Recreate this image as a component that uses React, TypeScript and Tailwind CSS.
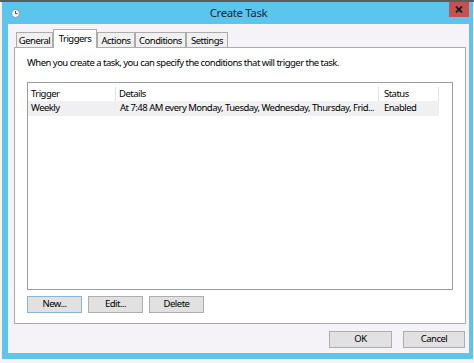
import React from "react";

const font = { fontFamily: '"Noto Sans", "Open Sans", sans-serif' };
const txt = "text-[9.5px] tracking-[-0.52px] text-black";

function Tab({ label, w, active }: { label: string; w: string; active?: boolean }) {
  return active ? (
    <div
      className={`${w} relative z-10 -mb-px flex h-[19px] justify-center border border-b-0 border-[#acacac] bg-white pt-[2px] ${txt} leading-[14px]`}
    >
      {label}
    </div>
  ) : (
    <div
      className={`${w} flex h-[15px] justify-center border border-b-0 border-[#acacac] bg-[#f0f0f0] pt-[1px] ${txt} leading-[13px]`}
    >
      {label}
    </div>
  );
}

function Btn({ label, w, focus }: { label: string; w: string; focus?: boolean }) {
  return (
    <div
      className={`${w} flex h-[17px] items-center justify-center border ${
        focus ? "border-[#8fb2d8]" : "border-[#adadad]"
      } bg-[#e1e1e1] ${txt}`}
    >
      {label}
    </div>
  );
}

export default function App() {
  return (
    <div className="relative h-[363px] w-[474px] overflow-hidden bg-[#f4f4f4]" style={font}>
      <div className="h-[2px] w-full bg-[#5c5c5c]" />
      <div className="ml-[2px] flex h-[357px] w-[471px] flex-col bg-[#5bc5ee] pb-[6px] pl-[6px] pr-[4px]">
        {/* title bar */}
        <div className="relative flex h-[22px] items-center justify-center">
          <svg className="absolute left-[3px] top-[7px]" width="9" height="9" viewBox="0 0 9 9">
            <circle cx="4.5" cy="4.5" r="4" fill="#fdf8e4" stroke="#7b8da0" strokeWidth="0.9" />
            <path d="M4.5 2v2.6h2" stroke="#3a3a3a" strokeWidth="0.9" fill="none" />
          </svg>
          <span className="text-[11.5px] leading-none tracking-[-0.4px] text-[#1a2a3a]">Create Task</span>
          <div className="absolute right-[0px] top-0 flex h-[15px] w-[20px] items-center justify-center bg-[#c75050]">
            <svg width="8" height="7" viewBox="0 0 8 7">
              <path d="M1 0.5l6 6M7 0.5l-6 6" stroke="#1a1a1a" strokeWidth="1.8" />
            </svg>
          </div>
        </div>
        {/* client */}
        <div className="flex flex-1 flex-col bg-[#f5f3f7] pl-[6px] pr-[3px] pt-[5px]">
          <div className="flex items-end pl-[2px]">
            <Tab label="General" w="w-[37px]" />
            <Tab label="Triggers" w="w-[44px]" active />
            <Tab label="Actions" w="w-[38px]" />
            <Tab label="Conditions" w="w-[51px]" />
            <Tab label="Settings" w="w-[42px]" />
          </div>
          <div className="flex h-[277px] flex-col border border-[#acacac] bg-white pl-[12px] pt-[9px]">
            <div className={`${txt} leading-[12px]`}>
              When you create a task, you can specify the conditions that will trigger the task.
            </div>
            <div className="mt-[13px] h-[208px] w-[426px] border border-[#9a9da4] bg-white">
              <div className={`flex h-[18px] w-[411px] items-start pt-[4px] ${txt}`}>
                <div className="flex h-[14px] w-[88px] items-center border-r border-[#e3e3e3] pl-[3px]">Trigger</div>
                <div className="flex h-[14px] w-[263px] items-center border-r border-[#e3e3e3] pl-[3px]">Details</div>
                <div className="flex h-[14px] w-[60px] items-center border-r border-[#e3e3e3] pl-[5px]">Status</div>
              </div>
              <div className={`flex h-[15px] w-[411px] items-center bg-[#f0eff1] ${txt}`}>
                <div className="w-[88px] pl-[3px]">Weekly</div>
                <div className="w-[263px] overflow-hidden whitespace-nowrap pl-[4px]">
                  At 7:48 AM every Monday, Tuesday, Wednesday, Thursday, Frid...
                </div>
                <div className="w-[60px] pl-[5px]">Enabled</div>
              </div>
            </div>
            <div className="mt-[6px] flex gap-[6px]">
              <Btn label="New..." w="w-[55px]" focus />
              <Btn label="Edit..." w="w-[55px]" />
              <Btn label="Delete" w="w-[55px]" />
            </div>
          </div>
          <div className="mt-[7px] flex justify-end gap-[11px] pr-[1px]">
            <Btn label="OK" w="w-[63px]" />
            <Btn label="Cancel" w="w-[62px]" />
          </div>
        </div>
      </div>
    </div>
  );
}
